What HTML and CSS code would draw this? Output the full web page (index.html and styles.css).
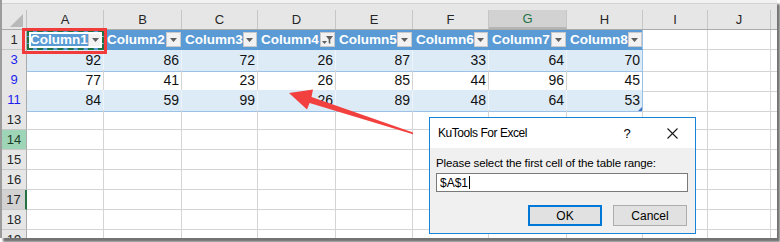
FILE: index.html
```html
<!DOCTYPE html>
<html lang="en">
<head>
    <meta charset="UTF-8">
    <title>Select first cell - KuTools</title>
    <link rel="stylesheet" href="styles.css">
</head>
<body>
    <div class="page">
        <div class="sheet">
            <div class="topbar"></div>

            <div class="row colhead">
                <div class="corner">
                    <svg width="14" height="15" viewBox="0 0 14 15"><polygon points="13,1 13,14 0,14" fill="#b9b9b9"/></svg>
                </div>
                <div class="ch">A</div>
                <div class="ch">B</div>
                <div class="ch">C</div>
                <div class="ch">D</div>
                <div class="ch">E</div>
                <div class="ch">F</div>
                <div class="ch sel">G</div>
                <div class="ch">H</div>
                <div class="ch">I</div>
                <div class="ch">J</div>
                <div class="ch last"></div>
            </div>

            <div class="row">
                <div class="rh">1</div>
                <div class="c th active"><span>Column1</span><span class="dd"><svg width="7" height="4" viewBox="0 0 7 4"><polygon points="0,0 7,0 3.5,4" fill="#5f5f5f"/></svg></span></div>
                <div class="c th"><span>Column2</span><span class="dd"><svg width="7" height="4" viewBox="0 0 7 4"><polygon points="0,0 7,0 3.5,4" fill="#5f5f5f"/></svg></span></div>
                <div class="c th"><span>Column3</span><span class="dd"><svg width="7" height="4" viewBox="0 0 7 4"><polygon points="0,0 7,0 3.5,4" fill="#5f5f5f"/></svg></span></div>
                <div class="c th"><span>Column4</span><span class="dd"><svg width="11" height="10" viewBox="0 0 11 10"><polygon points="0,6 5,6 2.5,9" fill="#5f5f5f"/><polygon points="4,1 11,1 8.3,4.5 8.3,9 6.7,8 6.7,4.5" fill="#5f5f5f"/></svg></span></div>
                <div class="c th"><span>Column5</span><span class="dd"><svg width="7" height="4" viewBox="0 0 7 4"><polygon points="0,0 7,0 3.5,4" fill="#5f5f5f"/></svg></span></div>
                <div class="c th"><span>Column6</span><span class="dd"><svg width="7" height="4" viewBox="0 0 7 4"><polygon points="0,0 7,0 3.5,4" fill="#5f5f5f"/></svg></span></div>
                <div class="c th"><span>Column7</span><span class="dd"><svg width="7" height="4" viewBox="0 0 7 4"><polygon points="0,0 7,0 3.5,4" fill="#5f5f5f"/></svg></span></div>
                <div class="c th tend"><span>Column8</span><span class="dd"><svg width="7" height="4" viewBox="0 0 7 4"><polygon points="0,0 7,0 3.5,4" fill="#5f5f5f"/></svg></span></div>
                <div class="c"></div>
                <div class="c"></div>
                <div class="c last"></div>
            </div>

            <div class="row band">
                <div class="rh filtered">3</div>
                <div class="c td">92</div>
                <div class="c td">86</div>
                <div class="c td">72</div>
                <div class="c td">26</div>
                <div class="c td">87</div>
                <div class="c td">33</div>
                <div class="c td">64</div>
                <div class="c td tend">70</div>
                <div class="c"></div>
                <div class="c"></div>
                <div class="c last"></div>
            </div>

            <div class="row">
                <div class="rh filtered">9</div>
                <div class="c td">77</div>
                <div class="c td">41</div>
                <div class="c td">23</div>
                <div class="c td">26</div>
                <div class="c td">85</div>
                <div class="c td">44</div>
                <div class="c td">96</div>
                <div class="c td tend">45</div>
                <div class="c"></div>
                <div class="c"></div>
                <div class="c last"></div>
            </div>

            <div class="row band tbottom">
                <div class="rh filtered">11</div>
                <div class="c td">84</div>
                <div class="c td">59</div>
                <div class="c td">99</div>
                <div class="c td">26</div>
                <div class="c td">89</div>
                <div class="c td">48</div>
                <div class="c td">64</div>
                <div class="c td tend handle">53</div>
                <div class="c"></div>
                <div class="c"></div>
                <div class="c last"></div>
            </div>

            <div class="row">
                <div class="rh">13</div>
                <div class="c"></div><div class="c"></div><div class="c"></div><div class="c"></div><div class="c"></div>
                <div class="c"></div><div class="c"></div><div class="c"></div><div class="c"></div><div class="c"></div>
                <div class="c last"></div>
            </div>
            <div class="row">
                <div class="rh green">14</div>
                <div class="c"></div><div class="c"></div><div class="c"></div><div class="c"></div><div class="c"></div>
                <div class="c"></div><div class="c"></div><div class="c"></div><div class="c"></div><div class="c"></div>
                <div class="c last"></div>
            </div>
            <div class="row">
                <div class="rh">15</div>
                <div class="c"></div><div class="c"></div><div class="c"></div><div class="c"></div><div class="c"></div>
                <div class="c"></div><div class="c"></div><div class="c"></div><div class="c"></div><div class="c"></div>
                <div class="c last"></div>
            </div>
            <div class="row">
                <div class="rh">16</div>
                <div class="c"></div><div class="c"></div><div class="c"></div><div class="c"></div><div class="c"></div>
                <div class="c"></div><div class="c"></div><div class="c"></div><div class="c"></div><div class="c"></div>
                <div class="c last"></div>
            </div>
            <div class="row">
                <div class="rh current">17</div>
                <div class="c"></div><div class="c"></div><div class="c"></div><div class="c"></div><div class="c"></div>
                <div class="c"></div><div class="c"></div><div class="c"></div><div class="c"></div><div class="c"></div>
                <div class="c last"></div>
            </div>
            <div class="row">
                <div class="rh">18</div>
                <div class="c"></div><div class="c"></div><div class="c"></div><div class="c"></div><div class="c"></div>
                <div class="c"></div><div class="c"></div><div class="c"></div><div class="c"></div><div class="c"></div>
                <div class="c last"></div>
            </div>
            <div class="row">
                <div class="rh">19</div>
                <div class="c"></div><div class="c"></div><div class="c"></div><div class="c"></div><div class="c"></div>
                <div class="c"></div><div class="c"></div><div class="c"></div><div class="c"></div><div class="c"></div>
                <div class="c last"></div>
            </div>
        </div>

        <div class="callout-box"></div>

        <svg class="arrow" width="780" height="242" viewBox="0 0 780 242">
            <polygon points="289,93 313,89.5 311.5,97 413,132.5 413,134.2 309.5,103 307,109.5" fill="#f2403f"/>
        </svg>

        <div class="dialog">
            <div class="dialog-title">
                <span class="dialog-name">KuTools For Excel</span>
                <span class="dialog-help">?</span>
                <span class="dialog-close">
                    <svg width="11" height="11" viewBox="0 0 11 11"><path d="M0.5 0.5 L10.5 10.5 M10.5 0.5 L0.5 10.5" stroke="#1a1a1a" stroke-width="1.1"/></svg>
                </span>
            </div>
            <div class="dialog-body">
                <div class="dialog-label">Please select the first cell of the table range:</div>
                <div class="dialog-input">$A$1<span class="caret"></span></div>
                <div class="dialog-buttons">
                    <button class="btn primary">OK</button>
                    <button class="btn">Cancel</button>
                </div>
            </div>
        </div>
    </div>
</body>
</html>
```

FILE: styles.css
```css
html, body {
    margin: 0;
    padding: 0;
    background: #ffffff;
    overflow: hidden;
}
.page {
    position: relative;
    width: 780px;
    height: 242px;
    font-family: "Liberation Sans", Arial, sans-serif;
}
.sheet {
    width: 775px;
    height: 238px;
    overflow: hidden;
    background: #ffffff;
    border-left: 2px solid #9c9c9c;
    box-shadow: 3px 4px 2px rgba(0,0,0,0.55);
}
.topbar {
    height: 3px;
    background: #f1f1f1;
    border-bottom: 1px solid #d2d2d2;
}
.row {
    display: grid;
    grid-template-columns: 25px 77px 78px 76px 78px 77px 76px 78px 76px 65px 63px 6px;
    height: 20px;
}
.colhead {
    height: 26px;
    background: #e6e6e6;
    border-bottom: 1px solid #ababab;
    box-sizing: border-box;
}
.corner {
    display: flex;
    align-items: flex-end;
    justify-content: flex-end;
    padding: 0 2px 1px 0;
    border-right: 1px solid #c0c0c0;
    margin-top: 6px;
}
.ch {
    margin-top: 6px;
    border-right: 1px solid #c6c6c6;
    font-size: 13px;
    line-height: 19px;
    text-align: center;
    color: #262626;
}
.ch.sel {
    background: #d2d2d2;
    color: #217346;
    border-bottom: 2px solid #b4b4b4;
    line-height: 17px;
}
.ch.last,
.c.last {
    border-right: none;
}
.rh {
    background: #e6e6e6;
    border-right: 1px solid #ababab;
    border-bottom: 1px solid #c8c8c8;
    font-size: 13px;
    line-height: 19px;
    text-align: center;
    color: #262626;
}
.rh.filtered {
    color: #1d1df0;
}
.rh.green {
    background: #9fd5b7;
    color: #1d3d2a;
}
.rh.current {
    background: #d2d2d2;
    border-right: 2px solid #217346;
}
.c {
    position: relative;
    box-sizing: border-box;
    border-right: 1px solid #d4d4d4;
    border-bottom: 1px solid #d4d4d4;
}
.th {
    display: flex;
    align-items: center;
    justify-content: space-between;
    padding-left: 3px;
    background: #5b9bd5;
    border-right-color: #5b9bd5;
    border-bottom-color: #5b9bd5;
    color: #ffffff;
    font-weight: bold;
    font-size: 13.5px;
}
.dd {
    display: flex;
    align-items: center;
    justify-content: center;
    width: 15px;
    height: 15px;
    box-sizing: border-box;
    background: #f2f2f2;
    border: 1px solid #c9c9c9;
}
.active::before {
    content: "";
    position: absolute;
    inset: 0 -1px -1px 0;
    border: 2px dashed #1e7145;
    box-shadow: inset 0 0 0 2px #ffffff;
    pointer-events: none;
}
.td {
    text-align: right;
    padding-right: 2px;
    font-size: 14px;
    line-height: 21px;
    color: #111111;
    border-bottom-color: #9bc2e6;
}
.band .td {
    background: #ddebf7;
    border-right-color: #eef4fb;
}
.tend {
    border-right-color: #9bc2e6;
}
.band .td.tend {
    border-right-color: #9bc2e6;
}
.handle::after {
    content: "";
    position: absolute;
    right: 0;
    bottom: 0;
    border-left: 4px solid transparent;
    border-bottom: 4px solid #4472c4;
}
.callout-box {
    position: absolute;
    left: 22px;
    top: 28px;
    width: 85px;
    height: 26px;
    box-sizing: border-box;
    border: 3px solid #f23b3b;
}
.arrow {
    position: absolute;
    left: 0;
    top: 0;
    pointer-events: none;
}
.dialog {
    position: absolute;
    left: 429px;
    top: 117px;
    width: 267px;
    height: 117px;
    box-sizing: border-box;
    border: 1px solid #1883d7;
    background: #f0f0f0;
    font-size: 11.5px;
    color: #000000;
}
.dialog-title {
    display: flex;
    align-items: center;
    height: 30px;
    padding-left: 8px;
    background: #ffffff;
}
.dialog-name {
    flex: 1;
    font-size: 12px;
    letter-spacing: -0.45px;
}
.dialog-help {
    width: 44px;
    font-size: 13px;
    text-align: center;
}
.dialog-close {
    display: flex;
    justify-content: center;
    width: 46px;
}
.dialog-body {
    padding: 8px 7px 0 6px;
}
.dialog-label {
    line-height: 14px;
    letter-spacing: -0.12px;
}
.dialog-input {
    display: flex;
    align-items: center;
    height: 19px;
    margin-top: 3px;
    padding-left: 3px;
    box-sizing: border-box;
    background: #ffffff;
    border: 1px solid #7a7a7a;
    font-size: 12px;
}
.caret {
    width: 1px;
    height: 13px;
    margin-left: 1px;
    background: #000000;
}
.dialog-buttons {
    display: flex;
    justify-content: flex-end;
    gap: 11px;
    margin-top: 13px;
    padding-right: 1px;
}
.btn {
    width: 74px;
    height: 21px;
    box-sizing: border-box;
    margin: 0;
    padding: 0;
    background: #e1e1e1;
    border: 1px solid #adadad;
    font-family: "Liberation Sans", Arial, sans-serif;
    font-size: 12px;
    color: #000000;
}
.btn.primary {
    border: 2px solid #0078d7;
}
```
